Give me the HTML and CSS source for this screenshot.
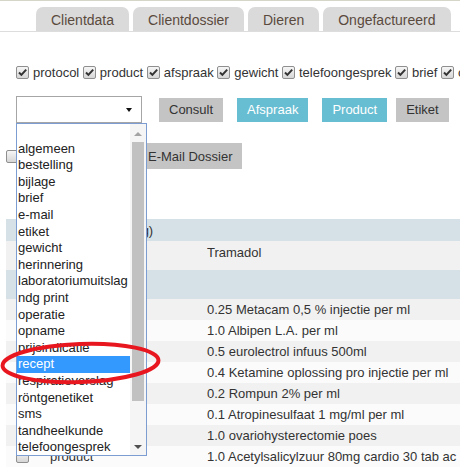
FILE: index.html
```html
<!DOCTYPE html>
<html lang="nl">
<head>
    <meta charset="UTF-8">
    <title>Dossier</title>
    <link rel="stylesheet" href="styles.css">
</head>
<body>
    <div class="page">
        <!-- tabbladen -->
        <div class="tabs">
            <div class="tab">Clientdata</div>
            <div class="tab">Clientdossier</div>
            <div class="tab">Dieren</div>
            <div class="tab">Ongefactureerd</div>
        </div>

        <!-- filters -->
        <div class="filters">
            <span class="cb"><svg viewBox="0 0 11 11"><path d="M2 5.5l2.4 2.4L9.2 2.6"/></svg></span><span class="lbl">protocol</span>
            <span class="cb"><svg viewBox="0 0 11 11"><path d="M2 5.5l2.4 2.4L9.2 2.6"/></svg></span><span class="lbl">product</span>
            <span class="cb"><svg viewBox="0 0 11 11"><path d="M2 5.5l2.4 2.4L9.2 2.6"/></svg></span><span class="lbl">afspraak</span>
            <span class="cb"><svg viewBox="0 0 11 11"><path d="M2 5.5l2.4 2.4L9.2 2.6"/></svg></span><span class="lbl">gewicht</span>
            <span class="cb"><svg viewBox="0 0 11 11"><path d="M2 5.5l2.4 2.4L9.2 2.6"/></svg></span><span class="lbl">telefoongesprek</span>
            <span class="cb"><svg viewBox="0 0 11 11"><path d="M2 5.5l2.4 2.4L9.2 2.6"/></svg></span><span class="lbl">brief</span>
            <span class="cb"><svg viewBox="0 0 11 11"><path d="M2 5.5l2.4 2.4L9.2 2.6"/></svg></span><span class="lbl">consult</span>
        </div>

        <!-- knoppen -->
        <div class="toolbar">
            <div class="select"><span class="arrow"></span></div>
            <button class="btn btn-consult">Consult</button>
            <button class="btn btn-blue">Afspraak</button>
            <button class="btn btn-blue">Product</button>
            <button class="btn btn-etiket">Etiket</button>
        </div>

        <div class="mailrow">
            <span class="cb"></span>
            <button class="btn btn-mail">E-Mail Dossier</button>
        </div>

        <!-- dossier -->
        <table class="dossier">
            <colgroup>
                <col class="col-1">
                <col class="col-2">
                <col class="col-3">
            </colgroup>
            <tr class="head head-1"><td colspan="3" class="head-txt">Consult (behandeling)</td></tr>
            <tr class="row tall"><td class="c1"><span class="cb"></span></td><td>product</td><td>Tramadol</td></tr>
            <tr class="head head-2"><td colspan="3"></td></tr>
            <tr class="row odd"><td class="c1"><span class="cb"></span></td><td>product</td><td>0.25 Metacam 0,5 % injectie per ml</td></tr>
            <tr class="row"><td class="c1"><span class="cb"></span></td><td>product</td><td>1.0 Albipen L.A. per ml</td></tr>
            <tr class="row odd"><td class="c1"><span class="cb"></span></td><td>product</td><td>0.5 eurolectrol infuus 500ml</td></tr>
            <tr class="row"><td class="c1"><span class="cb"></span></td><td>product</td><td>0.4 Ketamine oplossing pro injectie per ml</td></tr>
            <tr class="row odd"><td class="c1"><span class="cb"></span></td><td>product</td><td>0.2 Rompun 2% per ml</td></tr>
            <tr class="row"><td class="c1"><span class="cb"></span></td><td>product</td><td>0.1 Atropinesulfaat 1 mg/ml per ml</td></tr>
            <tr class="row odd"><td class="c1"><span class="cb"></span></td><td>product</td><td>1.0 ovariohysterectomie poes</td></tr>
            <tr class="row"><td class="c1"><span class="cb"></span></td><td>product</td><td>1.0 Acetylsalicylzuur 80mg cardio 30 tab ac</td></tr>
        </table>

        <!-- open keuzelijst -->
        <div class="dropdown">
            <div class="opt"></div>
            <div class="opt">algemeen</div>
            <div class="opt">bestelling</div>
            <div class="opt">bijlage</div>
            <div class="opt">brief</div>
            <div class="opt">e-mail</div>
            <div class="opt">etiket</div>
            <div class="opt">gewicht</div>
            <div class="opt">herinnering</div>
            <div class="opt">laboratoriumuitslag</div>
            <div class="opt">ndg print</div>
            <div class="opt">operatie</div>
            <div class="opt">opname</div>
            <div class="opt">prijsindicatie</div>
            <div class="opt selected">recept</div>
            <div class="opt">respiratieverslag</div>
            <div class="opt">röntgenetiket</div>
            <div class="opt">sms</div>
            <div class="opt">tandheelkunde</div>
            <div class="opt">telefoongesprek</div>
            <div class="scrollbar">
                <span class="sb-up"></span>
                <span class="sb-thumb"></span>
                <span class="sb-down"></span>
            </div>
        </div>

        <!-- markering -->
        <svg class="marker" width="460" height="471" viewBox="0 0 460 471">
            <ellipse cx="80.5" cy="363" rx="78" ry="19" transform="rotate(-2 80.5 363)"/>
        </svg>
    </div>
</body>
</html>
```

FILE: styles.css
```css
body {
    margin: 0;
    font-family: "Liberation Sans", Arial, sans-serif;
    font-size: 13px;
    color: #333;
    background: #fff;
    overflow: hidden;
}

.page {
    position: relative;
    width: 460px;
    height: 471px;
    overflow: hidden;
    border-top: 1px solid #d6d6c8;
    box-sizing: border-box;
}

.tabs {
    display: flex;
    gap: 4px;
    padding-left: 36px;
    margin-top: 6px;
    border-bottom: 1px solid #dddddd;
}

.tab {
    height: 24px;
    line-height: 27px;
    padding: 0 15px;
    background: #dadada;
    border-radius: 7px 7px 0 0;
    font-size: 14px;
    color: #5a4a3e;
    white-space: nowrap;
}

.filters {
    display: flex;
    align-items: center;
    height: 15px;
    margin-top: 33px;
    padding-left: 16px;
    white-space: nowrap;
}

.cb {
    display: inline-block;
    flex: none;
    width: 13px;
    height: 13px;
    box-sizing: border-box;
    border: 1px solid #8f8f8f;
    border-radius: 2px;
    background: linear-gradient(#f6f6f6, #d6d6d6);
    vertical-align: middle;
}

.cb svg {
    display: block;
    width: 11px;
    height: 11px;
}

.cb path {
    fill: none;
    stroke: #333;
    stroke-width: 2;
}

.lbl {
    margin: 0 3.6px 0 4px;
    color: #333;
}

.toolbar {
    display: flex;
    align-items: center;
    margin-top: 16px;
    padding-left: 16px;
}

.select {
    position: relative;
    width: 126px;
    height: 27px;
    box-sizing: border-box;
    border: 1px solid #a6a6a6;
    background: #fff;
}

.arrow {
    position: absolute;
    left: 109px;
    top: 11px;
    border-left: 3.5px solid transparent;
    border-right: 3.5px solid transparent;
    border-top: 4px solid #111;
}

.btn {
    height: 24px;
    padding: 0 10px;
    border: none;
    font-family: inherit;
    font-size: 13px;
    color: #333;
    background: #c4c4c4;
}

.btn-consult { margin-left: 17px; }

.btn-blue {
    margin-left: 14px;
    background: #67bdd1;
    color: #fff;
}

.btn-etiket { margin-left: 9px; }

.mailrow {
    display: flex;
    align-items: center;
    margin-top: 20px;
    padding-left: 6px;
    height: 26px;
}

.btn-mail {
    height: 26px;
    margin-left: 123px;
    padding: 0 9px 0 6px;
}

.dossier {
    margin: 50px 0 0 6px;
    border-collapse: collapse;
    table-layout: fixed;
    width: 640px;
    white-space: nowrap;
}

.col-1 { width: 44px; }
.col-2 { width: 157px; }
.col-3 { width: 439px; }

.dossier td {
    padding: 0;
    overflow: hidden;
}

.head td {
    background: #d5e1e6;
}

.head-1 { height: 22px; }
.head-2 { height: 29px; }

.dossier .head-txt {
    padding-left: 20px;
}

.row { height: 21px; background: #fbfbfb; }
.row.odd { background: #f1f1f1; }
.row.tall { height: 29px; background: #f1f1f1; }
.row.tall td { vertical-align: top; padding-top: 4px; }

.dossier .c1 { padding-left: 10px; }
.c1 .cb { display: block; }

.dropdown {
    position: absolute;
    left: 16px;
    top: 122px;
    width: 131px;
    height: 333px;
    box-sizing: border-box;
    border: 1px solid #7b9dd2;
    background: #fff;
    overflow: hidden;
}

.opt {
    height: 16.6px;
    line-height: 16.6px;
    width: 112px;
    padding-left: 1px;
    color: #222;
    white-space: nowrap;
}

.opt.selected {
    background: #3399ff;
    color: #fff;
}

.scrollbar {
    position: absolute;
    right: 0;
    top: 0;
    width: 16px;
    height: 100%;
    background: #f5f5f5;
}

.sb-up, .sb-down {
    position: absolute;
    left: 4px;
    border-left: 4px solid transparent;
    border-right: 4px solid transparent;
}

.sb-up {
    top: 8px;
    border-bottom: 4px solid #a3a3a3;
}

.sb-down {
    bottom: 6px;
    border-top: 4px solid #505050;
}

.sb-thumb {
    position: absolute;
    left: 2px;
    top: 18px;
    width: 12px;
    height: 259px;
    background: #c1c1c1;
}

.marker {
    position: absolute;
    left: 0;
    top: -1px;
    pointer-events: none;
}

.marker ellipse {
    fill: none;
    stroke: #e8161f;
    stroke-width: 4;
}
```
